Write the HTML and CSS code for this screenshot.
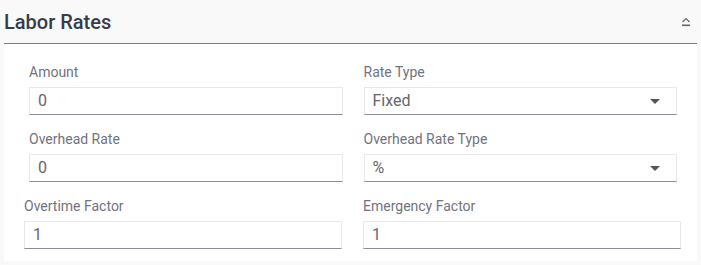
FILE: index.html
```html
<!DOCTYPE html>
<html lang="en">
<head>
    <meta charset="UTF-8">
    <title>Labor Rates</title>
    <link rel="stylesheet" href="styles.css">
</head>
<body>

    <!--labor rates panel-->
    <div class="panel">
        <div class="panel-head">
            <h2 class="title">Labor Rates</h2>
            <span class="collapse">
                <svg width="10" height="10" viewBox="0 0 10 10">
                    <path d="M1.5 5 L5 1.5 L8.5 5" fill="none" stroke="#666" stroke-width="1.2"/>
                    <rect x="1" y="7.5" width="8" height="1.6" fill="#666"/>
                </svg>
            </span>
        </div>
        <div class="panel-body">
            <div class="form-row">
                <div class="field">
                    <label>Amount</label>
                    <div class="input">0</div>
                </div>
                <div class="field">
                    <label>Rate Type</label>
                    <div class="input select">Fixed<span class="caret"></span></div>
                </div>
            </div>
            <div class="form-row">
                <div class="field">
                    <label>Overhead Rate</label>
                    <div class="input">0</div>
                </div>
                <div class="field">
                    <label>Overhead Rate Type</label>
                    <div class="input select">%<span class="caret"></span></div>
                </div>
            </div>
            <div class="form-row wide">
                <div class="field">
                    <label>Overtime Factor</label>
                    <div class="input">1</div>
                </div>
                <div class="field">
                    <label>Emergency Factor</label>
                    <div class="input">1</div>
                </div>
            </div>
        </div>
    </div>

</body>
</html>
```

FILE: styles.css
```css
/*reset*/
body, h2 {
    margin: 0;
    padding: 0;
}
body {
    background-color: #f9f9f9;
    font-family: Roboto, "Liberation Sans", sans-serif;
}

/*panel*/
.panel {
    margin: 0 4px;
}
.panel .panel-head {
    display: flex;
    justify-content: space-between;
    align-items: center;
    height: 43px;
    border-bottom: 1px solid #3a8ee0;
}
.panel .title {
    font-size: 20px;
    font-weight: 500;
    color: #3a3b48;
}
.panel .collapse {
    display: flex;
    margin-right: 6px;
}
.panel .panel-body {
    height: 197px;
    padding-top: 20px;
    background-color: #fff;
}

/*form*/
.form-row {
    display: grid;
    grid-template-columns: 1fr 1fr;
    column-gap: 21px;
    margin-bottom: 16px;
    padding: 0 20px 0 25px;
}
.form-row.wide {
    padding: 0 16px 0 20px;
}
.field label {
    display: block;
    margin-bottom: 7px;
    font-size: 14px;
    line-height: 16px;
    color: #72737e;
}
.field .input {
    position: relative;
    box-sizing: border-box;
    height: 28px;
    padding-left: 8px;
    border: 1px solid #e8e8e8;
    border-bottom-color: #8c8c96;
    font-size: 16px;
    line-height: 26px;
    color: #666670;
}
.field .select .caret {
    position: absolute;
    top: 11px;
    right: 16px;
    width: 0;
    height: 0;
    border-left: 5px solid transparent;
    border-right: 5px solid transparent;
    border-top: 5px solid #555;
}
```
